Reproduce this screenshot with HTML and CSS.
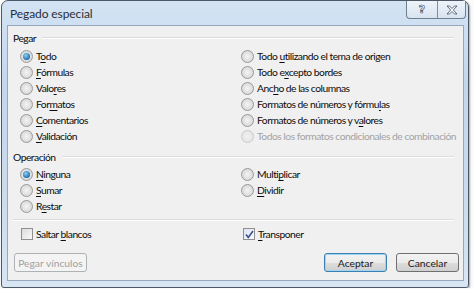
FILE: index.html
```html
<!DOCTYPE html>
<html lang="es">
<head>
  <meta charset="UTF-8" />
  <title>Pegado especial</title>
  <link rel="stylesheet" href="styles.css">
</head>
<body>
  <div class="window">
    <div class="titlebar">
      <span class="title">Pegado especial</span>
      <div class="caption">
        <span class="cap help">?</span>
        <span class="cap close">
          <svg width="12" height="10" viewBox="0 0 12 10"><path d="M1 1h2.5L6 3.5 8.5 1H11L7.3 5 11 9H8.5L6 6.5 3.5 9H1l3.7-4z" fill="#fff" stroke="#4a5a6e" stroke-width="0.9"/></svg>
        </span>
      </div>
    </div>

    <div class="client">
      <div class="section"><span>Pegar</span></div>
      <div class="options">
        <div class="col">
          <label class="opt"><span class="radio on"></span><span>T<u>o</u>do</span></label>
          <label class="opt"><span class="radio"></span><span><u>F</u>órmulas</span></label>
          <label class="opt"><span class="radio"></span><span>Valo<u>r</u>es</span></label>
          <label class="opt"><span class="radio"></span><span>For<u>m</u>atos</span></label>
          <label class="opt"><span class="radio"></span><span><u>C</u>omentarios</span></label>
          <label class="opt"><span class="radio"></span><span><u>V</u>alidación</span></label>
        </div>
        <div class="col">
          <label class="opt"><span class="radio"></span><span>Todo <u>u</u>tilizando el tema de origen</span></label>
          <label class="opt"><span class="radio"></span><span>Todo e<u>x</u>cepto bordes</span></label>
          <label class="opt"><span class="radio"></span><span>Anc<u>h</u>o de las columnas</span></label>
          <label class="opt"><span class="radio"></span><span>Formatos de números y fórmu<u>l</u>as</span></label>
          <label class="opt"><span class="radio"></span><span>Formatos de números y v<u>a</u>lores</span></label>
          <label class="opt off"><span class="radio"></span><span>Todos los formatos condicionales de combinación</span></label>
        </div>
      </div>

      <div class="section op"><span>Operación</span></div>
      <div class="options tight">
        <div class="col">
          <label class="opt"><span class="radio on"></span><span><u>N</u>inguna</span></label>
          <label class="opt"><span class="radio"></span><span><u>S</u>umar</span></label>
          <label class="opt"><span class="radio"></span><span>R<u>e</u>star</span></label>
        </div>
        <div class="col">
          <label class="opt"><span class="radio"></span><span>Multi<u>p</u>licar</span></label>
          <label class="opt"><span class="radio"></span><span><u>D</u>ividir</span></label>
        </div>
      </div>

      <div class="sep"></div>

      <div class="options checks">
        <div class="col">
          <label class="opt"><span class="check"></span><span>Saltar <u>b</u>lancos</span></label>
        </div>
        <div class="col">
          <label class="opt"><span class="check on">
            <svg width="9" height="9" viewBox="0 0 9 9"><path d="M1 4.5l2.3 3L8 1" fill="none" stroke="#3a4f8c" stroke-width="1.6"/></svg>
          </span><span><u>T</u>ransponer</span></label>
        </div>
      </div>

      <div class="buttons">
        <button class="btn disabled">Pegar vínculos</button>
        <span class="spacer"></span>
        <button class="btn default">Aceptar</button>
        <button class="btn">Cancelar</button>
      </div>
    </div>
  </div>
</body>
</html>
```

FILE: styles.css
```css
body { margin: 0; background: #fbfbfb; font-family: Lato, "Open Sans", sans-serif; font-size: 10.3px; letter-spacing: -0.5px; color: #0c0c0c; }
u { text-decoration-thickness: 1px; text-underline-offset: 2px; }

.window { margin-left: 1px; width: 468px; height: 288px; box-sizing: border-box; border: 1px solid #4d5866; border-radius: 7px 7px 3px 3px;
  background: linear-gradient(#d3e3f4, #c3d7ec 30%, #cbdced 70%, #d8e6f4); padding: 0 4px 6px 5px; display: flex; flex-direction: column;
  box-shadow: 1px 1px 2px rgba(0,0,0,0.35); }

.titlebar { height: 24px; display: flex; align-items: flex-start; }
.title { margin: 5px 0 0 3px; font-size: 12px; letter-spacing: -0.1px; color: #2a2f36; }
.caption { margin-left: auto; margin-right: -2px; display: flex; border: 1px solid #6f7f92; border-top: none; border-radius: 0 0 4px 4px; overflow: hidden;
  background: linear-gradient(#eef3f9, #d9e4f0); height: 17px; }
.cap { display: flex; align-items: center; justify-content: center; height: 17px; }
.help { width: 30px; border-right: 1px solid #7d8ea3; font-family: "DejaVu Sans", sans-serif; font-size: 11px; font-weight: bold; color: #fff;
  letter-spacing: 0; -webkit-text-stroke: 0.7px #4a5a6e; }
.close { width: 27px; }

.client { flex: 1; background: #f0f0f0; border: 1px solid #97a8bd; padding: 4px 9px 0 5px; }

.section { display: flex; align-items: center; height: 16px; }
.section span { padding-right: 6px; }
.section::after { content: ""; flex: 1; border-top: 1px solid #dcdcdc; border-bottom: 1px solid #fff; }
.section.op { margin-top: 5px; }

.options { display: flex; padding-top: 2px; }
.options.tight { padding-top: 1px; }
.col { display: flex; flex-direction: column; }
.col:first-child { flex: none; width: 228px; padding-left: 7px; box-sizing: border-box; }
.opt { display: flex; align-items: center; height: 16px; white-space: nowrap; }
.opt.off { color: #a3a3a3; }
.opt.off .radio { opacity: 0.45; }

.radio { width: 11px; height: 11px; border-radius: 50%; border: 1px solid #9a9a9a; margin-right: 3px; box-sizing: content-box;
  background: radial-gradient(circle at 50% 50%, #f4f4f4, #d8d8d8 75%); flex: none; position: relative; }
.radio.on::after { content: ""; position: absolute; left: 2px; top: 2px; width: 7px; height: 7px; border-radius: 50%;
  background: radial-gradient(circle at 40% 35%, #8fd0f5, #1f6fb0 70%, #1a4f85); }

.sep { margin: 5px 0 5px 0; border-top: 1px solid #dcdcdc; border-bottom: 1px solid #fff; }

.checks { padding-top: 0; }
.checks .col:first-child { padding-left: 8px; }
.checks .col + .col { padding-left: 2px; }
.check { width: 10px; height: 10px; border: 1px solid #8f8f8f; background: linear-gradient(135deg, #dcdcdc, #f8f8f8); margin-right: 3px;
  display: flex; align-items: center; justify-content: center; flex: none; }
.check.on { background: linear-gradient(135deg, #dde4f3, #fafbfe); }

.buttons { display: flex; margin-top: 11px; padding-left: 1px; }
.spacer { flex: 1; }
.btn { font: inherit; white-space: nowrap; height: 19px; padding: 0; border: 1px solid #707070; border-radius: 3px; color: #1a1a1a;
  background: linear-gradient(#f2f2f2 0%, #ebebeb 50%, #dddddd 51%, #cfcfcf 100%); }
.btn.disabled { width: 73px; color: #a0a0a0; border-color: #adb2b5; background: #f4f4f4; }
.btn.default { width: 63px; margin-right: 9px; border-color: #3c7fb1; box-shadow: inset 0 0 0 1px #9fd5f2; }
.btn + .btn { width: 63px; }
.btn:last-child { margin-right: -5px; }
```
